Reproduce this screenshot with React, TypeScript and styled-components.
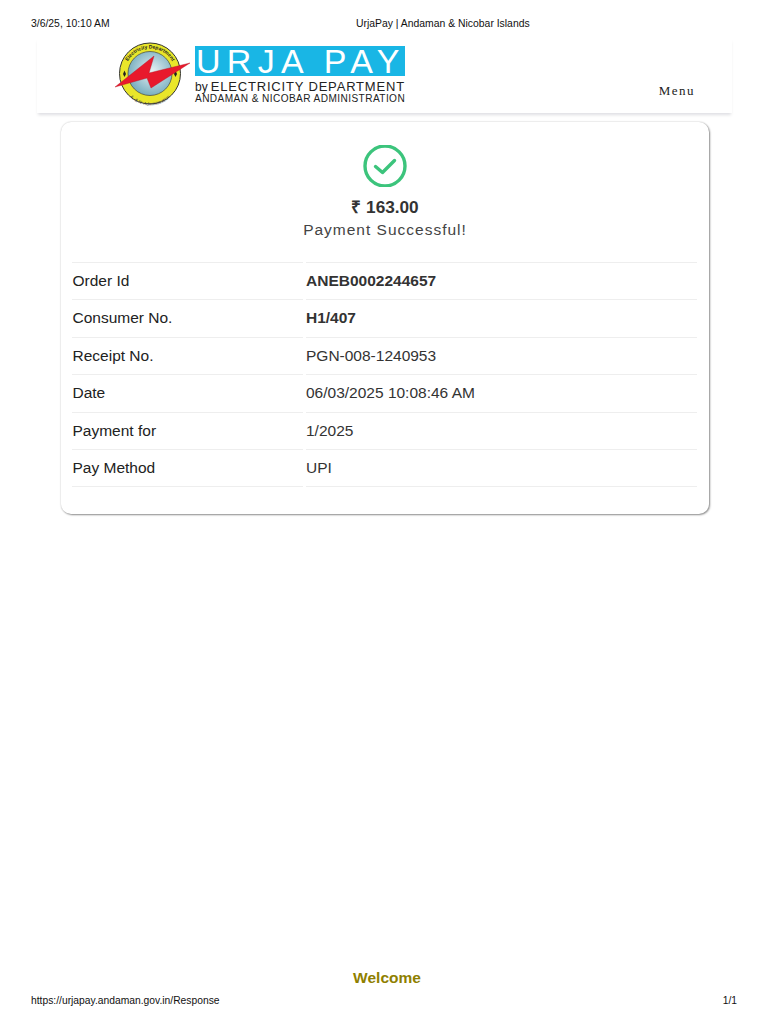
import React from 'react';
import styled, { createGlobalStyle } from 'styled-components';

const GlobalStyle = createGlobalStyle`
  html, body {
    margin: 0;
    padding: 0;
    background: #fff;
  }
  body {
    font-family: "Liberation Sans", Arial, sans-serif;
  }
`;

const Page = styled.div`
  width: 768px;
  height: 1024px;
  display: flex;
  flex-direction: column;
  overflow: hidden;
  background: #fff;
`;

const PrintHeader = styled.div`
  display: grid;
  grid-template-columns: 325px auto;
  padding: 18px 31px 0;
  height: 20px;
  font-size: 10.4px;
  line-height: 12px;
  color: #111;
`;

const Navbar = styled.div`
  margin: 0 36px 0 37px;
  height: 75px;
  display: flex;
  align-items: flex-start;
  justify-content: space-between;
  background: #fff;
  box-shadow: 0 3px 3px -1px rgba(0, 0, 40, 0.13);
`;

const Logo = styled.div`
  display: flex;
  align-items: flex-start;
  gap: 4px;
  margin: 3px 0 0 77px;
`;

const Emblem = styled.svg`
  width: 77px;
  height: 66px;
  flex: none;
`;

const Brand = styled.div`
  width: 210px;
  margin-top: 5px;
  display: flex;
  flex-direction: column;
`;

const BrandBar = styled.div`
  height: 30px;
  background: #19b6e5;
  color: #fff;
  font-size: 34px;
  line-height: 30px;
  letter-spacing: 6.3px;
  padding-left: 1px;
  white-space: nowrap;
`;

const BrandLine = styled.div`
  margin-top: 3px;
  height: 14px;
  font-size: 13px;
  line-height: 15px;
  letter-spacing: 0.82px;
  color: #222;
  white-space: nowrap;
`;

const BrandBy = styled.span`
  font-size: 12px;
  letter-spacing: 0;
  margin-right: 3px;
`;

const BrandSub = styled.div`
  font-size: 10.1px;
  line-height: 12px;
  letter-spacing: 0.42px;
  color: #222;
  white-space: nowrap;
`;

const MenuLabel = styled.div`
  margin: 46px 37px 0 0;
  font-family: "Liberation Serif", "Times New Roman", serif;
  font-size: 13px;
  line-height: 14px;
  letter-spacing: 1.5px;
  color: #222;
`;

const Card = styled.div`
  margin: 9px 0 0 61px;
  width: 648px;
  height: 392px;
  box-sizing: border-box;
  padding: 23px 11px 0;
  background: #fff;
  border-radius: 10px;
  box-shadow: 0 0 2px rgba(0, 0, 0, 0.2), 1px 1px 2px rgba(0, 0, 0, 0.42);
`;

const Summary = styled.div`
  display: flex;
  flex-direction: column;
  align-items: center;
  height: 117px;
`;

const Amount = styled.div`
  margin-top: 10px;
  font-size: 17.2px;
  line-height: 20px;
  font-weight: 700;
  color: #333;
`;

const Status = styled.div`
  margin-top: 4px;
  font-size: 15.5px;
  line-height: 18px;
  letter-spacing: 1px;
  color: #444;
`;

const Rows = styled.div`
  width: 626px;
  display: flex;
  flex-direction: column;
`;

const Row = styled.div`
  display: grid;
  grid-template-columns: 231px 391px;
  column-gap: 3px;
  height: 37.4px;
`;

const Cell = styled.div<{ $bold?: boolean; $label?: boolean }>`
  box-sizing: border-box;
  border-top: 1px solid #eee;
  padding-left: ${p => (p.$label ? '0.5px' : '0')};
  font-size: 15.5px;
  line-height: 36px;
  font-weight: ${p => (p.$bold ? 700 : 400)};
  color: ${p => (p.$label ? '#222' : '#333')};
`;

const BottomRule = styled.div`
  display: grid;
  grid-template-columns: 231px 391px;
  column-gap: 3px;
  height: 1px;
  & > div {
    background: #eee;
  }
`;

const Spacer = styled.div`
  flex: 1;
`;

const Welcome = styled.div`
  text-align: center;
  font-size: 15.5px;
  line-height: 18px;
  font-weight: 700;
  color: #8f7f00;
  margin: 0 0 3px 6px;
`;

const PrintFooter = styled.div`
  display: flex;
  justify-content: space-between;
  padding: 5px 31px 17px;
  font-size: 10.3px;
  line-height: 12px;
  color: #111;
`;

const rows = [
  { label: 'Order Id', value: 'ANEB0002244657', bold: true },
  { label: 'Consumer No.', value: 'H1/407', bold: true },
  { label: 'Receipt No.', value: 'PGN-008-1240953' },
  { label: 'Date', value: '06/03/2025 10:08:46 AM' },
  { label: 'Payment for', value: '1/2025' },
  { label: 'Pay Method', value: 'UPI' },
];

const EmblemMark = () => (
  <Emblem viewBox="0 0 77 66">
    <defs>
      <path id="arcTop" d="M10.5 33 A25.5 25.5 0 0 1 61.5 33" />
      <path id="arcBottom" d="M7.5 36 A28.5 28.5 0 0 0 64.5 36" />
      <radialGradient id="dial" cx="0.55" cy="0.45" r="0.6">
        <stop offset="0" stopColor="#e8f2f4" />
        <stop offset="1" stopColor="#6fa9bb" />
      </radialGradient>
    </defs>
    <circle cx="36" cy="32.5" r="30.5" fill="#e9e62a" stroke="#333" strokeWidth="1" />
    <circle cx="36" cy="32.5" r="22" fill="url(#dial)" stroke="#444" strokeWidth="0.7" />
    <text fontFamily="Liberation Sans, sans-serif" fontSize="5" fontWeight="700" fill="#222">
      <textPath href="#arcTop" startOffset="50%" textAnchor="middle">Electricity Department</textPath>
    </text>
    <text fontFamily="Liberation Sans, sans-serif" fontSize="4.6" fill="#444">
      <textPath href="#arcBottom" startOffset="50%" textAnchor="middle">A. &amp; N. Administration</textPath>
    </text>
    <polygon points="9,33 10.5,29.5 12,33 10.5,36" fill="#222" />
    <polygon points="60,33 61.5,29.5 63,33 61.5,36" fill="#222" />
    <polygon points="1,46 40,15 35,32 76,22 37,47 33,37" fill="#e8192c" stroke="#b5101f" strokeWidth="0.4" />
  </Emblem>
);

const SuccessIcon = () => (
  <svg width="44" height="42" viewBox="0 0 44 42" fill="none">
    <circle cx="22" cy="21" r="20" stroke="#3cc47c" strokeWidth="3.4" />
    <path d="M12.5 21.5 L19.5 27.5 L31.5 15.5" stroke="#3cc47c" strokeWidth="3.4" strokeLinecap="round" strokeLinejoin="round" />
  </svg>
);

export default function App() {
  return (
    <Page>
      <GlobalStyle />
      <PrintHeader>
        <span>3/6/25, 10:10 AM</span>
        <span>UrjaPay | Andaman &amp; Nicobar Islands</span>
      </PrintHeader>
      <Navbar>
        <Logo>
          <EmblemMark />
          <Brand>
            <BrandBar>URJA PAY</BrandBar>
            <BrandLine><BrandBy>by</BrandBy>ELECTRICITY DEPARTMENT</BrandLine>
            <BrandSub>ANDAMAN &amp; NICOBAR ADMINISTRATION</BrandSub>
          </Brand>
        </Logo>
        <MenuLabel>Menu</MenuLabel>
      </Navbar>
      <Card>
        <Summary>
          <SuccessIcon />
          <Amount>₹ 163.00</Amount>
          <Status>Payment Successful!</Status>
        </Summary>
        <Rows>
          {rows.map(r => (
            <Row key={r.label}>
              <Cell $label>{r.label}</Cell>
              <Cell $bold={r.bold}>{r.value}</Cell>
            </Row>
          ))}
          <BottomRule>
            <div />
            <div />
          </BottomRule>
        </Rows>
      </Card>
      <Spacer />
      <Welcome>Welcome</Welcome>
      <PrintFooter>
        <span>https://urjapay.andaman.gov.in/Response</span>
        <span>1/1</span>
      </PrintFooter>
    </Page>
  );
}
